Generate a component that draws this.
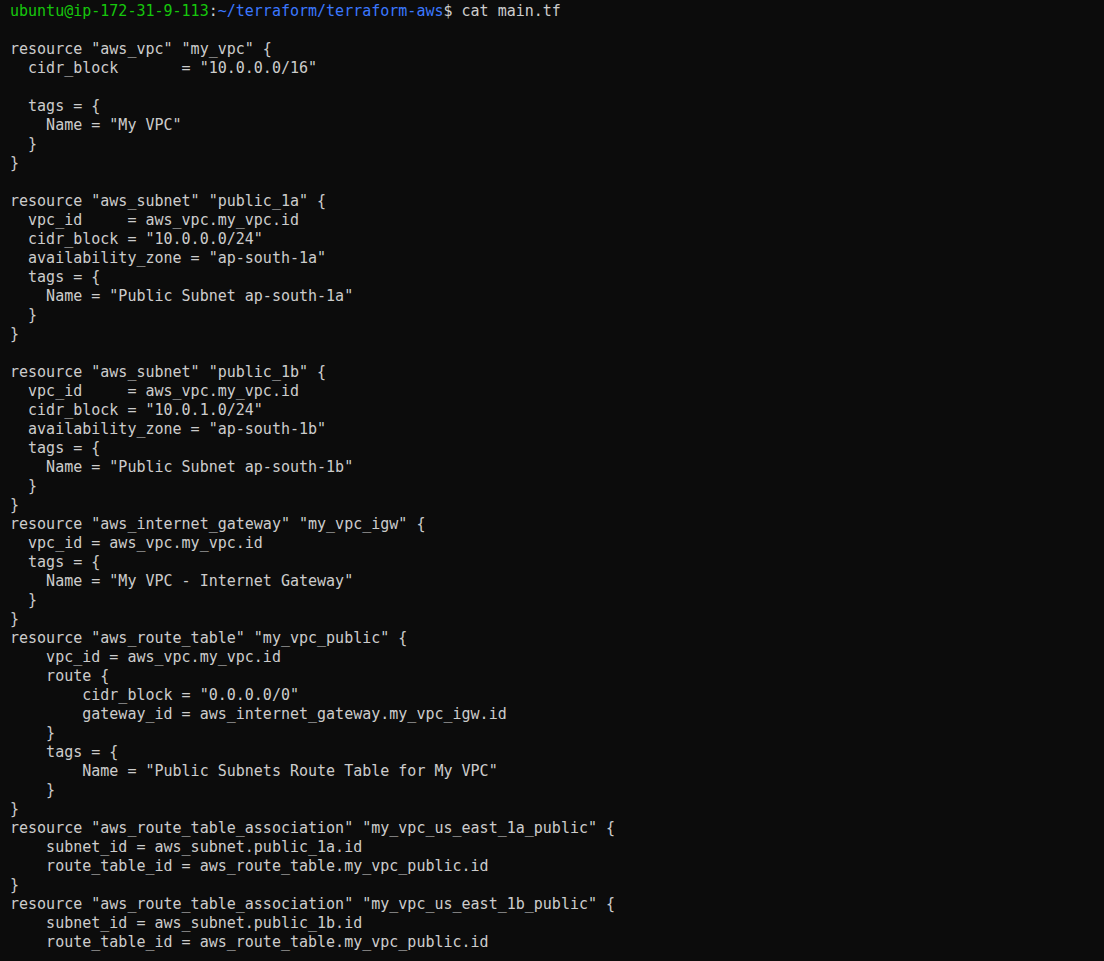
import React from 'react';

const lines: string[] = [
  '',
  'resource "aws_vpc" "my_vpc" {',
  '  cidr_block       = "10.0.0.0/16"',
  '',
  '  tags = {',
  '    Name = "My VPC"',
  '  }',
  '}',
  '',
  'resource "aws_subnet" "public_1a" {',
  '  vpc_id     = aws_vpc.my_vpc.id',
  '  cidr_block = "10.0.0.0/24"',
  '  availability_zone = "ap-south-1a"',
  '  tags = {',
  '    Name = "Public Subnet ap-south-1a"',
  '  }',
  '}',
  '',
  'resource "aws_subnet" "public_1b" {',
  '  vpc_id     = aws_vpc.my_vpc.id',
  '  cidr_block = "10.0.1.0/24"',
  '  availability_zone = "ap-south-1b"',
  '  tags = {',
  '    Name = "Public Subnet ap-south-1b"',
  '  }',
  '}',
  'resource "aws_internet_gateway" "my_vpc_igw" {',
  '  vpc_id = aws_vpc.my_vpc.id',
  '  tags = {',
  '    Name = "My VPC - Internet Gateway"',
  '  }',
  '}',
  'resource "aws_route_table" "my_vpc_public" {',
  '    vpc_id = aws_vpc.my_vpc.id',
  '    route {',
  '        cidr_block = "0.0.0.0/0"',
  '        gateway_id = aws_internet_gateway.my_vpc_igw.id',
  '    }',
  '    tags = {',
  '        Name = "Public Subnets Route Table for My VPC"',
  '    }',
  '}',
  'resource "aws_route_table_association" "my_vpc_us_east_1a_public" {',
  '    subnet_id = aws_subnet.public_1a.id',
  '    route_table_id = aws_route_table.my_vpc_public.id',
  '}',
  'resource "aws_route_table_association" "my_vpc_us_east_1b_public" {',
  '    subnet_id = aws_subnet.public_1b.id',
  '    route_table_id = aws_route_table.my_vpc_public.id',
];

export default function App() {
  return (
    <div className="w-[1104px] h-[961px] overflow-hidden bg-[#0c0c0c] text-[#cccccc] pl-[10px] pt-[2px] font-['DejaVu_Sans_Mono',monospace] text-[15px] leading-[19px]">
      {/* prompt line */}
      <div className="whitespace-pre h-[19px]">
        <span className="text-[#16c60c]">ubuntu@ip-172-31-9-113</span>
        <span>:</span>
        <span className="text-[#3b78ff]">~/terraform/terraform-aws</span>
        <span>$ cat main.tf</span>
      </div>
      {lines.map((line, i) => (
        <div key={i} className="whitespace-pre h-[19px]">
          {line}
        </div>
      ))}
    </div>
  );
}
